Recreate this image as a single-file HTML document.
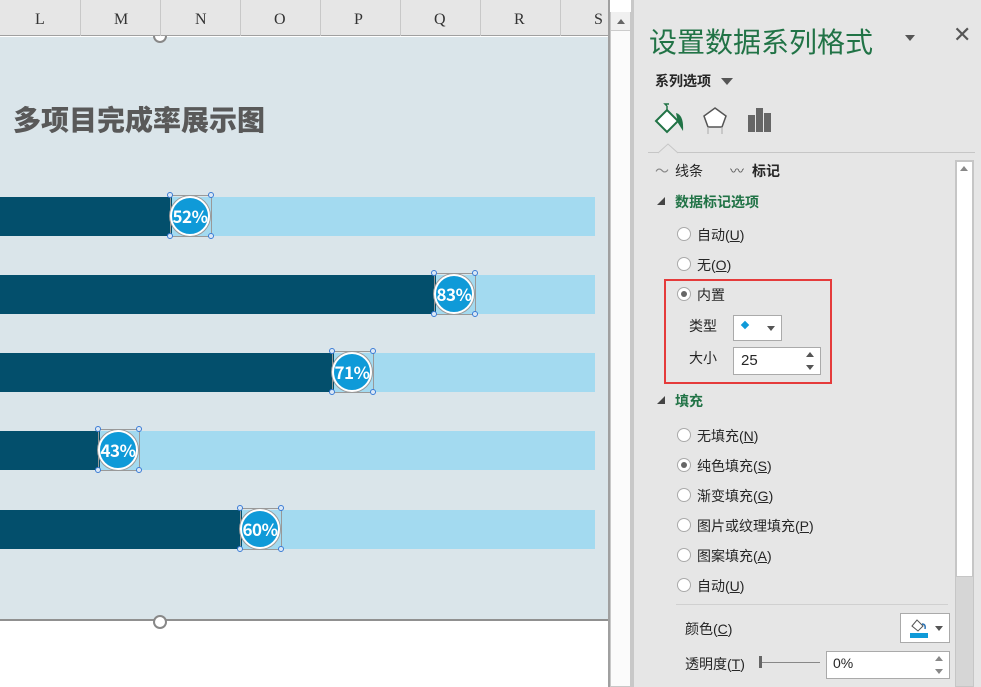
<!DOCTYPE html>
<html><head><meta charset="utf-8"><style>
*{margin:0;padding:0;box-sizing:border-box}
body{width:981px;height:687px;overflow:hidden;position:relative;background:#fff;font-family:"Liberation Sans","Microsoft YaHei","Noto Sans CJK SC",sans-serif;}
.a{position:absolute}
.hdr{left:0;top:0;width:608px;height:36px;background:#e6e6e6;border-bottom:1px solid #a0a0a0}
.col{position:absolute;top:11px;font-family:"Liberation Serif",serif;font-size:16px;color:#333}
.sep{position:absolute;top:0;width:1px;height:36px;background:#c8c8c8}
.chart{left:0;top:37px;width:608px;height:584px;background:#dae5ea;border-bottom:2px solid #909090}
.bg{position:absolute;left:0;width:595px;height:39px;background:#a3daf0}
.fg{position:absolute;left:0;height:39px;background:#034f6c}
.dot{position:absolute;width:40px;height:40px;border-radius:50%;background:#0f9ad8;border:2px solid #fff;box-shadow:0 0 0 1px #999;color:#fff;font-weight:bold;font-size:17px;line-height:36px;text-align:center;letter-spacing:-0.5px;font-family:"Noto Sans CJK SC","Liberation Sans",sans-serif}
.sel{position:absolute;width:42px;height:42px;border:1px solid #999}
.h{position:absolute;width:6px;height:6px;border:1px solid #3a7bd5;background:#dbe8f6;border-radius:50%}
.panel{left:634px;top:0;width:347px;height:687px;background:#e6e6e6}
.t{position:absolute;font-size:14px;color:#262626;white-space:nowrap;font-family:"Liberation Sans","Noto Sans CJK SC",sans-serif}
.g{color:#217346;font-weight:bold}
.r{position:absolute;width:14px;height:14px;border-radius:50%;border:1px solid #aaa;background:#fff}
.r.on::after{content:"";position:absolute;left:3px;top:3px;width:6px;height:6px;border-radius:50%;background:#666}
.tri{position:absolute;width:0;height:0;border-left:4px solid transparent;border-right:4px solid transparent;border-top:5px solid #555}
.box{position:absolute;background:#fff;border:1px solid #aaa}
u{text-decoration:underline}
</style></head><body>
<div class="a hdr">
<span class="col" style="left:35px">L</span><span class="col" style="left:114px">M</span><span class="col" style="left:195px">N</span><span class="col" style="left:274px">O</span><span class="col" style="left:354px">P</span><span class="col" style="left:434px">Q</span><span class="col" style="left:514px">R</span><span class="col" style="left:594px">S</span>
<div class="sep" style="left:80px"></div><div class="sep" style="left:160px"></div><div class="sep" style="left:240px"></div><div class="sep" style="left:320px"></div><div class="sep" style="left:400px"></div><div class="sep" style="left:480px"></div><div class="sep" style="left:560px"></div>
</div>
<div class="a chart">
<div class="a" style="left:13px;top:62px;font-size:28px;font-weight:900;color:#595959;font-family:'Noto Sans CJK SC',sans-serif">多项目完成率展示图</div>
<div class="bg" style="top:160px"></div><div class="fg" style="top:160px;width:172px"></div>
<div class="bg" style="top:238px"></div><div class="fg" style="top:238px;width:436px"></div>
<div class="bg" style="top:316px"></div><div class="fg" style="top:316px;width:334px"></div>
<div class="bg" style="top:394px"></div><div class="fg" style="top:394px;width:100px"></div>
<div class="bg" style="top:473px"></div><div class="fg" style="top:473px;width:242px"></div>
</div>
<div class="a" style="left:153px;top:29px;width:14px;height:14px;border-radius:50%;border:2px solid #888;background:#fff;clip-path:inset(7px 0 0 0)"></div>
<div class="a" style="left:153px;top:615px;width:14px;height:14px;border-radius:50%;border:2px solid #888;background:#fff"></div>

<div class="sel" style="left:170px;top:195px"></div><div class="dot" style="left:170px;top:196px">52%</div>
<div class="h" style="left:167px;top:192px"></div><div class="h" style="left:208px;top:192px"></div><div class="h" style="left:167px;top:233px"></div><div class="h" style="left:208px;top:233px"></div>
<div class="sel" style="left:434px;top:273px"></div><div class="dot" style="left:434px;top:274px">83%</div>
<div class="h" style="left:431px;top:270px"></div><div class="h" style="left:472px;top:270px"></div><div class="h" style="left:431px;top:311px"></div><div class="h" style="left:472px;top:311px"></div>
<div class="sel" style="left:332px;top:351px"></div><div class="dot" style="left:332px;top:352px">71%</div>
<div class="h" style="left:329px;top:348px"></div><div class="h" style="left:370px;top:348px"></div><div class="h" style="left:329px;top:389px"></div><div class="h" style="left:370px;top:389px"></div>
<div class="sel" style="left:98px;top:429px"></div><div class="dot" style="left:98px;top:430px">43%</div>
<div class="h" style="left:95px;top:426px"></div><div class="h" style="left:136px;top:426px"></div><div class="h" style="left:95px;top:467px"></div><div class="h" style="left:136px;top:467px"></div>
<div class="sel" style="left:240px;top:508px"></div><div class="dot" style="left:240px;top:509px">60%</div>
<div class="h" style="left:237px;top:505px"></div><div class="h" style="left:278px;top:505px"></div><div class="h" style="left:237px;top:546px"></div><div class="h" style="left:278px;top:546px"></div>

<div class="a" style="left:608px;top:0;width:2px;height:687px;background:#a0a0a0"></div>
<div class="a" style="left:610px;top:12px;width:21px;height:675px;background:#fbfbfb;border:1px solid #c8c8c8"></div>
<div class="a" style="left:611px;top:12px;width:19px;height:19px;background:#f0f0f0;border-bottom:1px solid #ccc"></div>
<div class="tri" style="left:617px;top:19px;border-top:none;border-bottom:5px solid #666"></div>
<div class="a" style="left:631px;top:0;width:3px;height:687px;background:#c8c8c8"></div>

<div class="a panel"></div>
<div class="t" style="left:649px;top:21px;font-size:28px;color:#217346;font-family:'Noto Sans CJK SC',sans-serif">设置数据系列格式</div>
<div class="tri" style="left:905px;top:35px;border-left-width:5px;border-right-width:5px;border-top-width:6px"></div>
<div class="t" style="left:953px;top:22px;font-size:22px;color:#555">✕</div>
<div class="t" style="left:655px;top:71px;font-weight:bold">系列选项</div>
<div class="tri" style="left:721px;top:78px;border-left-width:6px;border-right-width:6px;border-top-width:7px"></div>
<svg class="a" style="left:652px;top:103px" width="140" height="36">
<path d="M4 18 L15 7 L26 18 L15 29 Z" fill="#fff" stroke="#217346" stroke-width="2"/>
<path d="M15 7 L15 3 M15 3 L13 1 L17 1" stroke="#217346" stroke-width="1.5" fill="none"/>
<path d="M24 10 Q32 12 31 28 L26 20 Z" fill="#217346"/>
<path d="M63 5 L74 13 L70 24 L56 24 L52 13 Z" fill="#fff" stroke="#555" stroke-width="1.5"/>
<path d="M56 24 L56 31 M70 24 L70 31" stroke="#aaa" stroke-width="1"/>
<rect x="96" y="12" width="7" height="17" fill="#666"/><rect x="104" y="5" width="7" height="24" fill="#666"/><rect x="112" y="10" width="7" height="19" fill="#666"/>
</svg>
<div class="a" style="left:648px;top:152px;width:327px;height:1px;background:#c6c6c6"></div>
<svg class="a" style="left:658px;top:143px" width="22" height="11"><path d="M0 10 L10 1 L20 10" fill="#e6e6e6" stroke="#c6c6c6"/></svg>

<div class="a" style="left:955px;top:160px;width:19px;height:527px;background:#d6d6d6;border:1px solid #c6c6c6"></div>
<div class="a" style="left:956px;top:161px;width:17px;height:416px;background:#fff;border:1px solid #c6c6c6"></div>
<div class="tri" style="left:960px;top:166px;border-top:none;border-bottom:5px solid #888"></div>

<div class="t" style="left:655px;top:161px;color:#888">〜</div>
<div class="t" style="left:675px;top:161px">线条</div>
<div class="t" style="left:730px;top:161px;color:#555">〰</div>
<div class="t" style="left:752px;top:161px;font-weight:bold">标记</div>
<div class="tri" style="left:657px;top:197px;border:none;width:0;height:0;border-left:8px solid transparent;border-bottom:8px solid #444"></div>
<div class="t g" style="left:675px;top:192px">数据标记选项</div>
<div class="r" style="left:677px;top:227px"></div><div class="t" style="left:697px;top:225px">自动(<u>U</u>)</div>
<div class="r" style="left:677px;top:257px"></div><div class="t" style="left:697px;top:255px">无(<u>O</u>)</div>
<div class="r on" style="left:677px;top:287px"></div><div class="t" style="left:697px;top:285px">内置</div>
<div class="t" style="left:689px;top:316px">类型</div>
<div class="box" style="left:733px;top:315px;width:49px;height:26px"></div>
<div class="a" style="left:742px;top:322px;width:6px;height:6px;background:#0f9ad8;transform:rotate(45deg)"></div>
<div class="tri" style="left:767px;top:326px"></div>
<div class="t" style="left:689px;top:348px">大小</div>
<div class="box" style="left:733px;top:347px;width:88px;height:28px"></div>
<div class="t" style="left:741px;top:352px;font-size:15px">25</div>
<div class="tri" style="left:806px;top:352px;border-top:none;border-bottom:5px solid #555"></div>
<div class="tri" style="left:806px;top:365px"></div>
<div class="a" style="left:664px;top:279px;width:168px;height:105px;border:2px solid #e53b3b"></div>

<div class="tri" style="left:657px;top:396px;border:none;width:0;height:0;border-left:8px solid transparent;border-bottom:8px solid #444"></div>
<div class="t g" style="left:675px;top:391px">填充</div>
<div class="r" style="left:677px;top:428px"></div><div class="t" style="left:697px;top:426px">无填充(<u>N</u>)</div>
<div class="r on" style="left:677px;top:458px"></div><div class="t" style="left:697px;top:456px">纯色填充(<u>S</u>)</div>
<div class="r" style="left:677px;top:488px"></div><div class="t" style="left:697px;top:486px">渐变填充(<u>G</u>)</div>
<div class="r" style="left:677px;top:518px"></div><div class="t" style="left:697px;top:516px">图片或纹理填充(<u>P</u>)</div>
<div class="r" style="left:677px;top:548px"></div><div class="t" style="left:697px;top:546px">图案填充(<u>A</u>)</div>
<div class="r" style="left:677px;top:578px"></div><div class="t" style="left:697px;top:576px">自动(<u>U</u>)</div>
<div class="a" style="left:676px;top:604px;width:272px;height:1px;background:#d0d0d0"></div>
<div class="t" style="left:685px;top:619px">颜色(<u>C</u>)</div>
<div class="box" style="left:900px;top:613px;width:50px;height:30px"></div>
<svg class="a" style="left:907px;top:616px" width="24" height="24"><path d="M5 10 L10 4 L16 10 L11 15 Z" fill="#fff" stroke="#555"/><path d="M15 8 Q19 8 18 13" stroke="#2e75b6" fill="none" stroke-width="1.5"/><rect x="3" y="17" width="18" height="5" fill="#0f9ad8"/></svg>
<div class="tri" style="left:935px;top:626px"></div>
<div class="t" style="left:685px;top:654px">透明度(<u>T</u>)</div>
<div class="a" style="left:759px;top:656px;width:3px;height:12px;background:#666"></div>
<div class="a" style="left:762px;top:662px;width:58px;height:1px;background:#888"></div>
<div class="box" style="left:826px;top:651px;width:124px;height:28px"></div>
<div class="t" style="left:833px;top:655px">0%</div>
<div class="tri" style="left:935px;top:656px;border-top:none;border-bottom:5px solid #888"></div>
<div class="tri" style="left:935px;top:669px;border-top-color:#888"></div>
</body></html>
